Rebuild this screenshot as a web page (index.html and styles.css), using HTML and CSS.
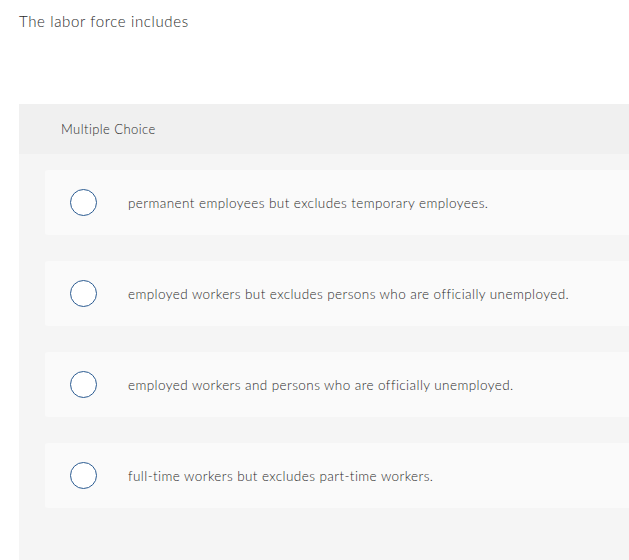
FILE: index.html
```html
<!DOCTYPE html>
<html>
<head>
<meta charset="utf-8">
<link rel="stylesheet" href="styles.css">
</head>
<body>
<div class="page">
  <p class="question">The labor force includes</p>
  <div class="panel">
    <div class="panel-head">Multiple Choice</div>
    <div class="options">
      <div class="option"><span class="radio"></span><span class="label">permanent employees but excludes temporary employees.</span></div>
      <div class="option"><span class="radio"></span><span class="label">employed workers but excludes persons who are officially unemployed.</span></div>
      <div class="option"><span class="radio"></span><span class="label">employed workers and persons who are officially unemployed.</span></div>
      <div class="option"><span class="radio"></span><span class="label">full-time workers but excludes part-time workers.</span></div>
    </div>
  </div>
</div>
</body>
</html>
```
FILE: styles.css
```css
html, body {
  margin: 0;
  padding: 0;
  background: #ffffff;
}
body {
  font-family: Lato, "Liberation Sans", sans-serif;
  font-weight: 300;
  color: #2a2a2a;
  overflow: hidden;
}
.page {
  padding: 12px 0 0 19px;
}
.question {
  margin: 0;
  font-size: 15px;
  line-height: 18px;
  letter-spacing: 0.63px;
  color: #2a2a2a;
}
.panel {
  margin-top: 74px;
  background: #f5f5f5;
  height: 470px;
}
.panel-head {
  height: 50px;
  background: #f0f0f0;
  display: flex;
  align-items: center;
  padding-left: 42px;
  font-size: 13px;
  letter-spacing: 0.43px;
  color: #2a2a2a;
}
.options {
  padding: 16px 0 0 26px;
  display: flex;
  flex-direction: column;
  gap: 26px;
}
.option {
  height: 65px;
  background: #fafafa;
  border-radius: 3px 0 0 3px;
  display: flex;
  align-items: center;
  padding-left: 25px;
}
.radio {
  width: 25px;
  height: 25px;
  border: 1.5px solid #2b5b91;
  border-radius: 50%;
  background: #ffffff;
  flex: none;
}
.label {
  margin-left: 31px;
  font-size: 13.5px;
  letter-spacing: 0.42px;
  color: #2a2a2a;
}
```
